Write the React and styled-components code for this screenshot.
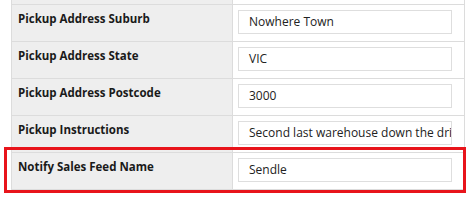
import * as React from 'react'
import styled, { createGlobalStyle } from 'styled-components'

const GlobalStyle = createGlobalStyle`
  html, body {
    margin: 0;
    padding: 0;
    background: #fff;
  }
  body {
    font-family: "Open Sans", "Liberation Sans", sans-serif;
    color: #222;
  }
`

const Wrapper = styled.div`
  padding: 0 10px 12px 11px;
`
const Table = styled.div`
  box-sizing: border-box;
  width: 454px;
  border: 1px solid #dcdcdc;
  border-top: none;
`
const Row = styled.div`
  position: relative;
  display: grid;
  grid-template-columns: 221px 1fr;
  height: ${props => props.stub ? '4px' : '36px'};
  ${props => props.stub ? '' : 'border-top: 1px solid #dcdcdc;'}
`
const Highlight = styled.div`
  position: absolute;
  left: -8px;
  right: -2px;
  top: -6px;
  bottom: -4px;
  border: 3px solid #e8141b;
  pointer-events: none;
`
const Label = styled.div`
  background: #eeeeee;
  border-right: 1px solid #dcdcdc;
  padding: 6px 0 0 6px;
  font-size: 11.5px;
  font-weight: 700;
  line-height: 15px;
  color: #1a1a1a;
`
const Value = styled.div`
  padding: 5px 10px 0 5px;
`
const Input = styled.div`
  box-sizing: border-box;
  width: 214px;
  height: 24px;
  border: 1px solid #dedede;
  padding: 0 10px;
  font-size: 12px;
  line-height: 22px;
  color: #222;
  white-space: nowrap;
  overflow: hidden;
`

const fields = [
  { label: 'Pickup Address Suburb', value: 'Nowhere Town' },
  { label: 'Pickup Address State', value: 'VIC' },
  { label: 'Pickup Address Postcode', value: '3000' },
  { label: 'Pickup Instructions', value: 'Second last warehouse down the driveway' },
  { label: 'Notify Sales Feed Name', value: 'Sendle', highlight: true },
]

export default function App() {
  return (
    <Wrapper>
      <GlobalStyle />
      <Table>
        {/* bottom edge of the row above, scrolled out of view */}
        <Row stub>
          <Label />
          <div />
        </Row>
        {fields.map(f => (
          <Row key={f.label}>
            <Label>{f.label}</Label>
            <Value>
              <Input>{f.value}</Input>
            </Value>
            {f.highlight ? <Highlight /> : null}
          </Row>
        ))}
      </Table>
    </Wrapper>
  )
}
